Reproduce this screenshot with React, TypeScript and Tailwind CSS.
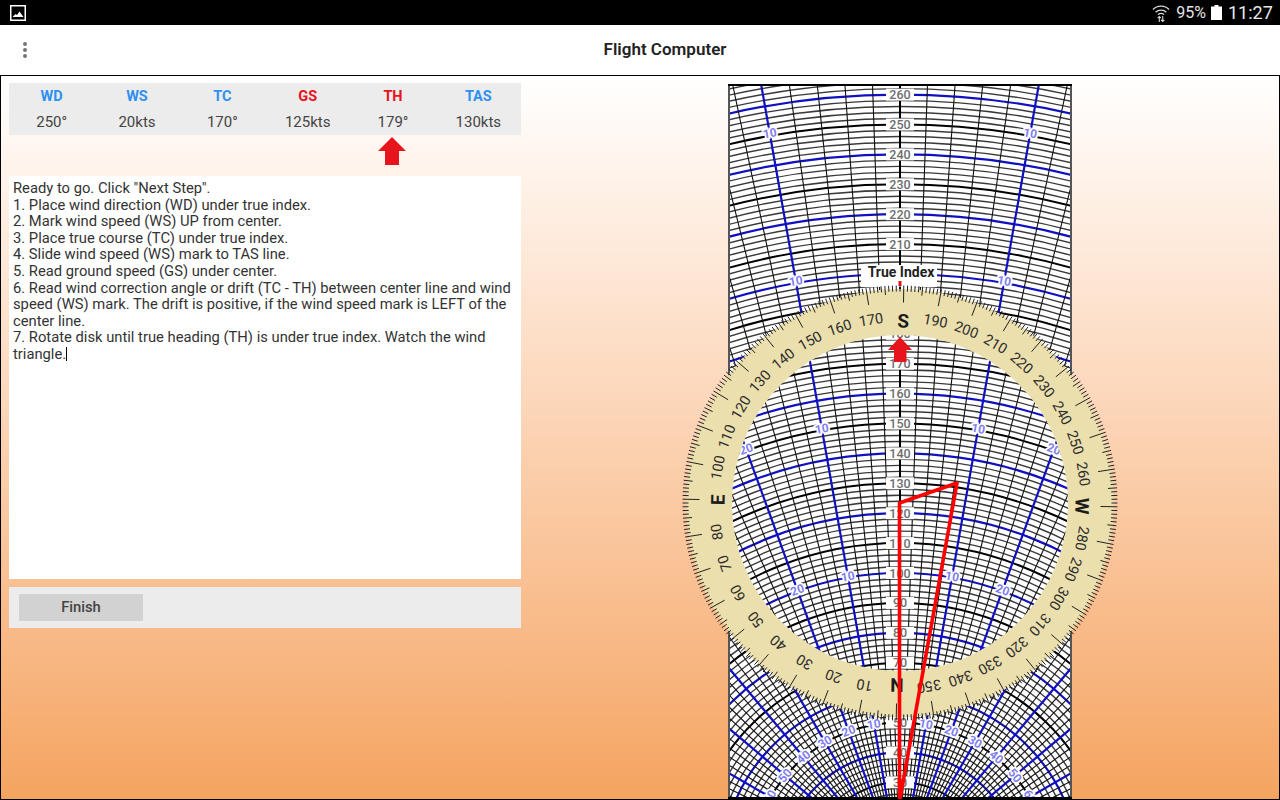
// Flight Computer: E6B wind side with instructions on the left and the slide rule chart on the right.

const CX = 900;
const CY = 872;
const PX = 2.99; // pixels per knot on the chart
const DX = 900;
const DY = 503;
const HEADING = 179;

function polar(r: number, deg: number, cx = CX, cy = CY) {
  const a = (deg * Math.PI) / 180;
  return { x: cx + r * Math.sin(a), y: cy - r * Math.cos(a) };
}

function arcPath(r: number) {
  const a = polar(r, -88);
  const b = polar(r, 88);
  return `M${a.x} ${a.y}A${r} ${r} 0 0 1 ${b.x} ${b.y}`;
}

function Chart() {
  const arcs: React.ReactNode[] = [];
  for (let s = 14; s <= 272; s += 2) {
    const blue = s % 20 === 0;
    const major = s % 10 === 0;
    arcs.push(
      <path
        key={s}
        d={arcPath(s * PX)}
        fill="none"
        stroke={blue ? "#1010c0" : major ? "#000" : "#3a3a3a"}
        strokeWidth={blue ? 2.2 : major ? 2 : 1.4}
      />,
    );
  }

  const radials: React.ReactNode[] = [];
  for (let d = -88; d <= 88; d += 2) {
    if (d === 0) continue;
    const blue = d % 10 === 0;
    const p = polar(900, d);
    const q = polar(30, d);
    radials.push(
      <line
        key={d}
        x1={q.x}
        y1={q.y}
        x2={p.x}
        y2={p.y}
        stroke={blue ? "#1010c0" : "#111"}
        strokeWidth={blue ? 2.2 : 1.1}
      />,
    );
  }

  const drift: React.ReactNode[] = [];
  for (let k = 1; k <= 5; k++) {
    for (let d = 10; d <= 60; d += 10) {
      if (k >= 2 && d > 20) continue;
      if (k >= 4 && d > 10) continue;
      for (const sign of [-1, 1]) {
        const p = polar(k * 150, sign * d);
        drift.push(
          <text
            key={`${k}-${d}-${sign}`}
            x={p.x}
            y={p.y}
            transform={`rotate(${sign * d} ${p.x} ${p.y})`}
            textAnchor="middle"
            dominantBaseline="central"
            fontSize={12}
            fontWeight={700}
            fill="#8080ee"
            stroke="#fff"
            strokeWidth={3.5}
            paintOrder="stroke"
          >
            {d}
          </text>,
        );
      }
    }
  }

  const speeds: React.ReactNode[] = [];
  for (let s = 30; s <= 260; s += 10) {
    if (s === 200) continue; // sits under the True Index plate
    const y = CY - s * PX;
    speeds.push(
      <g key={s}>
        <rect x={CX - 14} y={y - 6} width={28} height={12} fill="#fff" />
        <text
          x={CX}
          y={y}
          textAnchor="middle"
          dominantBaseline="central"
          fontSize={12.5}
          fontWeight={500}
          fill="#6e6e6e"
        >
          {s}
        </text>
      </g>,
    );
  }

  return (
    <g clipPath="url(#chart-clip)">
      <rect x={729} y={84} width={342} height={715} fill="#fff" />
      {arcs}
      {radials}
      <line x1={CX} y1={84} x2={CX} y2={799} stroke="#000" strokeWidth={2} />
      {speeds}
      {drift}
      <rect x={861} y={265} width={76} height={22} fill="#fff" />
      <text x={901} y={272} textAnchor="middle" dominantBaseline="central" fontSize={14} fontWeight={700} fill="#222">
        True Index
      </text>
      <rect x={898.5} y={281} width={3} height={5} fill="#e8141c" />
    </g>
  );
}

function Disk() {
  const ticks: React.ReactNode[] = [];
  const labels: React.ReactNode[] = [];
  const cardinal: Record<number, string> = { 0: "N", 90: "E", 180: "S", 270: "W" };

  for (let d = 0; d < 360; d++) {
    const phi = d - HEADING;
    const len = d % 10 === 0 ? 17 : d % 5 === 0 ? 9 : 6;
    const a = polar(217.5, phi, DX, DY);
    const b = polar(217.5 - len, phi, DX, DY);
    ticks.push(<line key={d} x1={a.x} y1={a.y} x2={b.x} y2={b.y} stroke="#222" strokeWidth={1} />);

    if (d % 10 === 0) {
      const p = polar(cardinal[d] ? 182 : 185, phi, DX, DY);
      labels.push(
        <text
          key={d}
          x={p.x}
          y={p.y}
          transform={`rotate(${phi} ${p.x} ${p.y})`}
          textAnchor="middle"
          dominantBaseline="central"
          fontSize={cardinal[d] ? 19 : 14.5}
          fontWeight={cardinal[d] ? 700 : 400}
          fill={cardinal[d] ? "#1c1c1c" : "#2c2c2c"}
        >
          {cardinal[d] ?? d}
        </text>,
      );
    }
  }

  return (
    <g>
      <circle cx={DX} cy={DY} r={191} fill="none" stroke="#ebdfae" strokeWidth={46} />
      {ticks}
      {labels}
      <path d="M900 337L912 350H906.5V362H894V350H888Z" fill="#e8141c" />
    </g>
  );
}

function FlightChart() {
  return (
    <svg className="block w-[450px] h-[723px]" viewBox="675 76 450 723">
      <defs>
        <clipPath id="chart-clip">
          <rect x={729} y={84} width={342} height={715} />
        </clipPath>
      </defs>
      <Chart />
      <rect x={729} y={85} width={342} height={713} fill="none" stroke="#555" strokeWidth={2} />
      <line x1={728} y1={85} x2={1072} y2={85} stroke="#000" strokeWidth={2} />
      <line x1={728} y1={798} x2={1072} y2={798} stroke="#000" strokeWidth={2} />
      <Disk />
      <path d="M899.5 799V503L957 483L900 799" fill="none" stroke="#f00" strokeWidth={3.6} strokeLinejoin="round" />
    </svg>
  );
}

const stats = [
  { label: "WD", value: "250°", red: false },
  { label: "WS", value: "20kts", red: false },
  { label: "TC", value: "170°", red: false },
  { label: "GS", value: "125kts", red: true },
  { label: "TH", value: "179°", red: true },
  { label: "TAS", value: "130kts", red: false },
];

function StatusBar() {
  return (
    <div className="flex h-[25px] items-center bg-black pl-2.5 pr-1.5 text-white">
      <svg width="16" height="16" viewBox="0 0 16 16">
        <rect x="0.75" y="0.75" width="14.5" height="14.5" fill="none" stroke="#fff" strokeWidth="1.5" />
        <path d="M2.5 12L5.5 9L7 10L9.5 6.5L13.5 12Z" fill="#fff" />
      </svg>
      <div className="ml-auto flex items-center">
        <svg width="18" height="20" viewBox="0 0 18 20" fill="none" stroke="#d8d8d8">
          <path d="M1 6.5C5.2 2 12.8 2 17 6.5" strokeWidth="1.3" />
          <path d="M3.6 9.2C6.4 6.4 11.6 6.4 14.4 9.2" strokeWidth="1.3" />
          <path d="M6 11.6C7.6 10.1 10.4 10.1 12 11.6" strokeWidth="1.3" />
          <path d="M7.3 19V13.5M5.7 15.1L7.3 13.5L8.9 15.1M10.7 13V18.5M9.1 16.9L10.7 18.5L12.3 16.9" strokeWidth="1.1" />
        </svg>
        <span className="ml-1.5 text-[16px] text-[#e4e4e4]">95%</span>
        <svg className="ml-[5px]" width="11" height="15" viewBox="0 0 11 15">
          <path d="M3.5 0H7.5V1.5H11V15H0V1.5H3.5Z" fill="#fff" />
        </svg>
        <span className="ml-[6px] w-[46px] text-[18px] text-[#e8e8e8]">11:27</span>
      </div>
    </div>
  );
}

function Toolbar() {
  return (
    <div className="flex h-[50px] items-center bg-white">
      <div className="flex w-[50px] flex-col items-center gap-[2px]">
        <span className="h-1 w-1 rounded-full bg-[#757575]" />
        <span className="h-1 w-1 rounded-full bg-[#757575]" />
        <span className="h-1 w-1 rounded-full bg-[#757575]" />
      </div>
      <h1 className="flex-1 text-center text-[17px] font-semibold text-[#222]">Flight Computer</h1>
    </div>
  );
}

function LeftPane() {
  return (
    <div className="flex w-[520px] flex-col pl-2 pt-[7px]">
      <div className="grid h-[52px] grid-cols-6 bg-[#ececec] pt-[6px] text-center">
        {stats.map((s) => (
          <div key={s.label} className="flex flex-col gap-[9px]">
            <span className={`text-[14.5px] font-bold leading-4 ${s.red ? "text-[#e8141c]" : "text-[#2f90f0]"}`}>
              {s.label}
            </span>
            <span className="text-[15px] leading-4 text-[#444]">{s.value}</span>
          </div>
        ))}
      </div>
      <div className="grid h-[41px] grid-cols-6 pt-0.5">
        <svg className="col-start-5 mr-[2px] justify-self-center" width="28" height="29" viewBox="0 0 28 29">
          <path d="M14 0L28 14H21V28H7V14H0Z" fill="#e8141c" />
        </svg>
      </div>
      <div className="h-[403px] bg-white px-1 pt-1 text-[14.75px] leading-[16.6px] text-[#333]">
        Ready to go. Click "Next Step".
        <br />
        1. Place wind direction (WD) under true index.
        <br />
        2. Mark wind speed (WS) UP from center.
        <br />
        3. Place true course (TC) under true index.
        <br />
        4. Slide wind speed (WS) mark to TAS line.
        <br />
        5. Read ground speed (GS) under center.
        <br />
        6. Read wind correction angle or drift (TC - TH) between center line and wind speed (WS) mark. The drift is
        positive, if the wind speed mark is LEFT of the center line.
        <br />
        7. Rotate disk until true heading (TH) is under true index. Watch the wind triangle.
        <span className="inline-block h-[14px] w-px align-[-2px] bg-black" />
      </div>
      <div className="mt-2 flex h-[41px] items-center bg-[#ececec] pl-2.5">
        <button className="h-[27px] w-[124px] bg-[#d2d2d2] text-[14.75px] font-medium text-[#444]">Finish</button>
      </div>
    </div>
  );
}

export default function App() {
  return (
    <div className="flex h-[800px] w-[1280px] flex-col overflow-hidden font-['Roboto',sans-serif]">
      <StatusBar />
      <Toolbar />
      <div className="flex flex-1 border border-black bg-linear-to-b from-white to-[#f4a460]">
        <LeftPane />
        <div className="flex flex-1 justify-center">
          <FlightChart />
        </div>
      </div>
    </div>
  );
}
